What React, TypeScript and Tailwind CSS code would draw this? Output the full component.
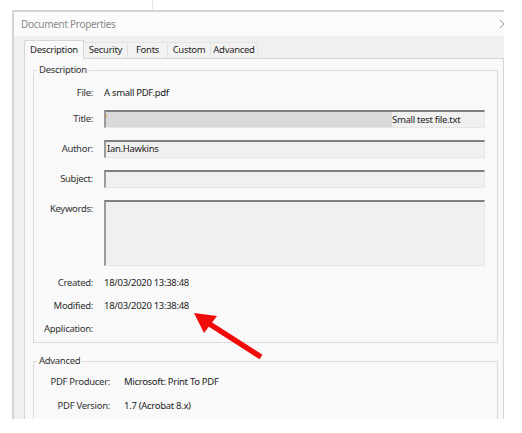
const font = { fontFamily: '"Noto Sans", "Open Sans", sans-serif' };

const txt = 'text-[9.5px] tracking-[-0.3px]';

function Tab({ label, width, active }: { label: string; width: string; active?: boolean }) {
  return (
    <div
      className={`${width} flex justify-center ${txt} text-[#1e1e1e] ${
        active
          ? 'h-[19px] pt-[2px] bg-[#f9f9f9] border border-b-0 border-[#d6d6d6] -mb-px relative z-10'
          : 'h-[16px] items-center bg-[#f2f2f2] border-r border-t border-[#e3e3e3]'
      }`}
    >
      {label}
    </div>
  );
}

function Field({ children, className = '' }: { children?: React.ReactNode; className?: string }) {
  return (
    <div
      className={`w-[381px] ml-[11px] bg-[#f0f0f0] border-t-2 border-l-2 border-t-[#7f7f7f] border-l-[#9a9a9a] border-r border-b border-r-[#e6e6e6] border-b-[#e6e6e6] ${className}`}
    >
      {children}
    </div>
  );
}

function Row({ label, children, className = '', top }: { label: string; children: React.ReactNode; className?: string; top?: boolean }) {
  return (
    <div className={`flex ${top ? 'items-start' : 'items-center'} ${className}`}>
      <div className={`w-[59px] text-right ${txt} text-[#333] ${top ? 'pt-[2px]' : ''}`}>{label}</div>
      {children}
    </div>
  );
}

export default function App() {
  return (
    <div className="relative w-[522px] h-[433px] bg-white overflow-hidden" style={font}>
      <div className="h-[10px] ml-[152px] w-px bg-[#e4e4e4]" />
      <div className="ml-[12px] w-[492px] h-[409px] overflow-hidden border-l-2 border-t-2 border-[#d4d4d4] bg-[#f0f0f0] flex flex-col">
        {/* Title bar */}
        <div className="h-[24px] bg-[#fbfbfb] flex items-center justify-between pl-[7px] shrink-0">
          <span className="text-[10px] tracking-[-0.3px] text-[#8a8a8a]">Document Properties</span>
          <svg width="10" height="10" viewBox="0 0 10 10" className="-mr-[5px]">
            <path d="M1 1 L9 9 M9 1 L1 9" stroke="#9a9a9a" strokeWidth="1" />
          </svg>
        </div>

        {/* Tabs */}
        <div className="pl-[10px] pt-[4px] flex flex-col flex-1">
          <div className="flex items-end h-[18px]">
            <Tab label="Description" width="w-[60px]" active />
            <Tab label="Security" width="w-[44px]" />
            <Tab label="Fonts" width="w-[40px]" />
            <Tab label="Custom" width="w-[43px]" />
            <Tab label="Advanced" width="w-[47px]" />
          </div>

          {/* Panel */}
          <div className="w-[480px] flex-1 bg-[#f9f9f9] border border-[#d6d6d6] px-[8px]">
            <fieldset className="mt-[4px] w-[465px] border border-[#dcdcdc] pt-[7px] pb-[4px]">
              <legend className={`ml-[3px] px-[2px] ${txt} leading-[14px] text-[#333]`}>Description</legend>
              <Row label="File:" className="h-[18px]">
                <span className={`ml-[11px] ${txt} text-[#222]`}>A small PDF.pdf</span>
              </Row>
              <Row label="Title:" className="mt-[8px] h-[18px]">
                <Field className="h-[18px] flex items-stretch">
                  <div className="w-[286px] bg-[#d9d9d9] flex items-start">
                    <div className="w-px h-[3px] mt-[2px] bg-[#f0b060]" />
                  </div>
                  <span className={`${txt} text-[#222] leading-[15px]`}>Small test file.txt</span>
                </Field>
              </Row>
              <Row label="Author:" className="mt-[12px] h-[18px]">
                <Field className="h-[18px] flex items-center pl-[1px]">
                  <span className={`${txt} text-[#222]`}>Ian.Hawkins</span>
                </Field>
              </Row>
              <Row label="Subject:" className="mt-[12px] h-[18px]">
                <Field className="h-[18px]" />
              </Row>
              <Row label="Keywords:" className="mt-[12px]" top>
                <Field className="h-[66px]" />
              </Row>
              <Row label="Created:" className="mt-[8px] h-[18px]">
                <span className={`ml-[11px] ${txt} text-[#222]`}>18/03/2020 13:38:48</span>
              </Row>
              <Row label="Modified:" className="mt-[5px] h-[18px]">
                <span className={`ml-[11px] ${txt} text-[#222]`}>18/03/2020 13:38:48</span>
              </Row>
              <Row label="Application:" className="mt-[5px] h-[18px]">
                <span />
              </Row>
            </fieldset>

            <fieldset className="mt-[11px] w-[465px] border border-[#dcdcdc] pt-[5px] pb-[10px]">
              <legend className={`ml-[3px] px-[2px] ${txt} leading-[14px] text-[#333]`}>Advanced</legend>
              <div className="flex items-center h-[18px]">
                <div className={`w-[76px] text-right ${txt} text-[#333]`}>PDF Producer:</div>
                <span className={`ml-[14px] ${txt} text-[#222]`}>Microsoft: Print To PDF</span>
              </div>
              <div className="flex items-center h-[18px] mt-[6px]">
                <div className={`w-[76px] text-right ${txt} text-[#333]`}>PDF Version:</div>
                <span className={`ml-[14px] ${txt} text-[#222]`}>1.7 (Acrobat 8.x)</span>
              </div>
            </fieldset>
          </div>
        </div>
      </div>

      {/* Red annotation arrow */}
      <svg className="absolute left-0 top-0 pointer-events-none" width="522" height="433" viewBox="0 0 522 433">
        <line x1="208" y1="323" x2="261" y2="357" stroke="#f20a0a" strokeWidth="5.5" />
        <polygon points="194,313 217,316 204,333" fill="#f20a0a" />
      </svg>
    </div>
  );
}
